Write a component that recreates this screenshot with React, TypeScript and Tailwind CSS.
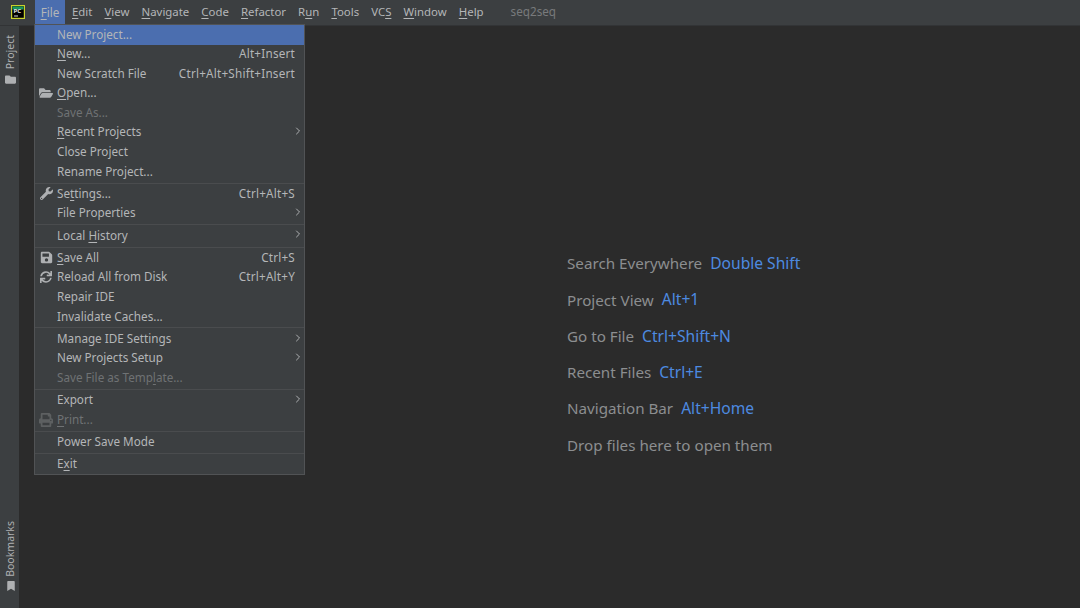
import { ChevronRight } from "lucide-react";
import { FaFolderOpen, FaWrench, FaSave, FaSync, FaPrint, FaFolder, FaBookmark } from "react-icons/fa";
import type { ReactNode } from "react";

const font = "font-['Noto_Sans','Open_Sans',sans-serif]";

// char at index `at` gets the mnemonic underline
function Mnemonic({ text, at }: { text: string; at?: number }) {
  if (at === undefined) return <>{text}</>;
  return (
    <>
      {text.slice(0, at)}
      <span className="underline underline-offset-2">{text[at]}</span>
      {text.slice(at + 1)}
    </>
  );
}

const menus: [string, number][] = [
  ["Edit", 0],
  ["View", 0],
  ["Navigate", 0],
  ["Code", 0],
  ["Refactor", 0],
  ["Run", 1],
  ["Tools", 0],
  ["VCS", 2],
  ["Window", 0],
  ["Help", 0],
];

type Row = {
  label: string;
  at?: number;
  shortcut?: string;
  icon?: ReactNode;
  arrow?: boolean;
  disabled?: boolean;
  active?: boolean;
};

const groups: Row[][] = [
  [
    { label: "New Project...", active: true },
    { label: "New...", at: 0, shortcut: "Alt+Insert" },
    { label: "New Scratch File", shortcut: "Ctrl+Alt+Shift+Insert" },
    { label: "Open...", at: 0, icon: <FaFolderOpen size={14} /> },
    { label: "Save As...", disabled: true },
    { label: "Recent Projects", at: 0, arrow: true },
    { label: "Close Project" },
    { label: "Rename Project..." },
  ],
  [
    { label: "Settings...", at: 2, shortcut: "Ctrl+Alt+S", icon: <FaWrench size={13} /> },
    { label: "File Properties", arrow: true },
  ],
  [{ label: "Local History", at: 6, arrow: true }],
  [
    { label: "Save All", at: 0, shortcut: "Ctrl+S", icon: <FaSave size={13} /> },
    { label: "Reload All from Disk", shortcut: "Ctrl+Alt+Y", icon: <FaSync size={12} /> },
    { label: "Repair IDE" },
    { label: "Invalidate Caches..." },
  ],
  [
    { label: "Manage IDE Settings", arrow: true },
    { label: "New Projects Setup", arrow: true },
    { label: "Save File as Template...", at: 17, disabled: true },
  ],
  [
    { label: "Export", arrow: true },
    { label: "Print...", at: 0, disabled: true, icon: <FaPrint size={14} /> },
  ],
  [{ label: "Power Save Mode" }],
  [{ label: "Exit", at: 1 }],
];

const hints: [string, string?][] = [
  ["Search Everywhere", "Double Shift"],
  ["Project View", "Alt+1"],
  ["Go to File", "Ctrl+Shift+N"],
  ["Recent Files", "Ctrl+E"],
  ["Navigation Bar", "Alt+Home"],
  ["Drop files here to open them"],
];

function MenuRow({ row }: { row: Row }) {
  const color = row.disabled ? "text-[#6f7274]" : "text-[#b4b6b8]";
  return (
    <div className={`flex h-[19.6px] items-center pb-[1px] ${row.active ? "bg-[#4b6eaf]" : ""} ${color}`}>
      <div className={`flex w-[22px] justify-center ${row.disabled ? "text-[#5d6061]" : "text-[#aeb0b2]"}`}>
        {row.icon}
      </div>
      <span className="flex-1 whitespace-nowrap">
        <Mnemonic text={row.label} at={row.at} />
      </span>
      {row.shortcut && <span className="whitespace-nowrap pr-[9px] tracking-[0.22px]">{row.shortcut}</span>}
      {row.arrow && <ChevronRight size={12} strokeWidth={2} className="mb-[2px] text-[#aeb0b2]" />}
    </div>
  );
}

export default function App() {
  return (
    <div className={`relative flex h-[608px] w-[1080px] flex-col overflow-hidden bg-[#2b2b2b] text-[11.7px] ${font}`}>
      {/* title bar */}
      <header className="flex h-[26px] shrink-0 items-stretch border-b border-[#323436] bg-[#3c3f41] text-[#b4b6b8]">
        <div className="flex w-[35px] items-center pl-[11px] pb-[1px]">
          <svg width="14" height="14" viewBox="0 0 14 14">
            <rect x="0.5" y="0.5" width="13" height="13" fill="#000" stroke="#c8d12c" strokeWidth="1.4" />
            <rect x="1.5" y="1.5" width="11" height="3" fill="#21d789" opacity="0.7" />
            <text x="2.5" y="7.5" fontSize="6" fontWeight="700" fill="#e8e8e8">PC</text>
            <rect x="3" y="10.5" width="4" height="1" fill="#d8d8d8" />
          </svg>
        </div>
        <div className="flex h-[25px] w-[30px] items-center justify-center bg-[#4b6eaf]">
          <Mnemonic text="File" at={0} />
        </div>
        <nav className="flex items-center gap-[12.1px] pb-[1px] pl-[7px] text-[11.4px]">
          {menus.map(([label, at]) => (
            <span key={label} className="whitespace-nowrap">
              <Mnemonic text={label} at={at} />
            </span>
          ))}
        </nav>
        <span className="flex items-center pb-[1px] pl-[27px] text-[#787a7c]">seq2seq</span>
      </header>

      <div className="flex flex-1">
        {/* tool window strip */}
        <aside className="flex w-[19px] shrink-0 flex-col justify-between bg-[#3c3f41] pl-[2px] text-[10.5px] text-[#aeb0b2]">
          <div className="flex flex-col items-center gap-[5px] pt-[9px]">
            <span className="rotate-180 leading-none [writing-mode:vertical-rl]">Project</span>
            <FaFolder size={11} />
          </div>
          <div className="flex flex-col items-center gap-[4px] pb-[17px]">
            <span className="rotate-180 leading-none [writing-mode:vertical-rl]">Bookmarks</span>
            <FaBookmark size={10} />
          </div>
        </aside>

        {/* welcome hints */}
        <main className="flex-1 pl-[548px] pt-[219.5px] text-[15.2px] text-[#8c8e90]">
          {hints.map(([label, key]) => (
            <div key={label} className="flex h-[36.3px] items-center gap-[8px] whitespace-nowrap">
              <span>{label}</span>
              {key && <span className="text-[15.6px] text-[#4d8ae0]">{key}</span>}
            </div>
          ))}
        </main>
      </div>

      {/* File dropdown */}
      <div className="absolute left-[34px] top-[24px] w-[271px] border border-[#515355] bg-[#3c3f41]">
        {groups.map((group, i) => (
          <div key={i} className={i > 0 ? "mt-[0.8px] border-t border-[#4a4c4e] pt-[0.8px]" : ""}>
            {group.map((row) => (
              <MenuRow key={row.label} row={row} />
            ))}
          </div>
        ))}
      </div>
    </div>
  );
}
